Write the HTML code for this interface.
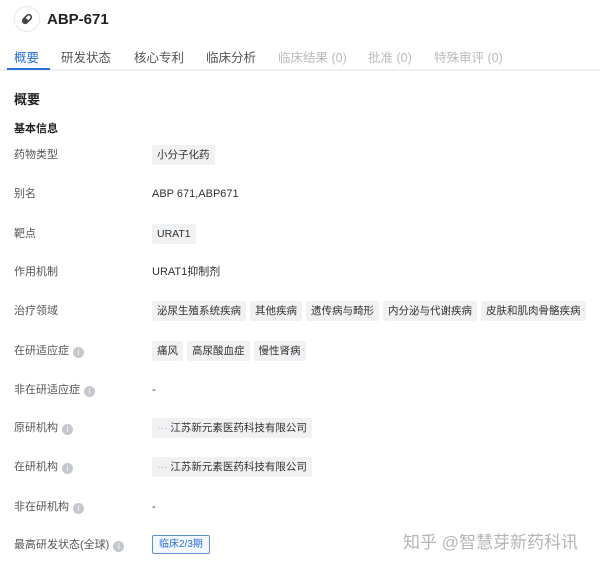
<!DOCTYPE html><html><head><meta charset="utf-8"><style>
body{margin:0;width:600px;height:563px;background:#fff;font-family:"Liberation Sans","Noto Sans CJK SC",sans-serif;color:#333;position:relative;overflow:hidden}
.a{position:absolute;white-space:nowrap}
.ic{position:absolute;left:14px;top:6px;width:26px;height:26px;border-radius:50%;border:1px solid #e6e6e6;box-sizing:border-box}
.tab{position:absolute;top:47px;font-size:12.5px;color:#555;white-space:nowrap}
.lbl{position:absolute;left:14px;font-size:11px;color:#555;line-height:14px;white-space:nowrap}
.val{position:absolute;left:152px;font-size:11px;color:#333;line-height:14px;white-space:nowrap}
.tag{display:inline-block;background:#f0f1f3;border-radius:2px;padding:3px 5px;font-size:10.5px;line-height:14px;margin-right:4px;color:#333}
.i{display:inline-block;width:11px;height:11px;border-radius:50%;background:#c4c7cc;color:#fff;font-size:8px;text-align:center;line-height:11px;vertical-align:-1px;margin-left:4px}
</style></head><body>
<div class="ic"><svg width="24" height="24" viewBox="0 0 24 24"><g transform="rotate(-45 12 12)"><rect x="7" y="9.5" width="10" height="5" rx="2.5" fill="none" stroke="#444" stroke-width="1.6"/><rect x="7" y="9.5" width="5" height="5" rx="2" fill="#444"/></g></svg></div>
<div class="a" style="left:47px;top:11px;font-size:15px;font-weight:bold;color:#222">ABP-671</div>
<div class="tab" style="left:14px;color:#2b6fd6">概要</div>
<div class="tab" style="left:61px">研发状态</div>
<div class="tab" style="left:134px">核心专利</div>
<div class="tab" style="left:206px">临床分析</div>
<div class="tab" style="left:278px;color:#bbb">临床结果 (0)</div>
<div class="tab" style="left:368px;color:#bbb">批准 (0)</div>
<div class="tab" style="left:434px;color:#bbb">特殊审评 (0)</div>
<div class="a" style="left:0;top:69px;width:600px;height:2px;background:#eef0f3"></div>
<div class="a" style="left:7px;top:68px;width:43px;height:2px;background:#2b6fd6"></div>
<div class="a" style="left:14px;top:89px;font-size:13px;font-weight:bold;color:#222">概要</div>
<div class="a" style="left:14px;top:120px;font-size:11px;font-weight:bold;color:#222">基本信息</div>
<div class="lbl" style="top:148px">药物类型</div><div class="val" style="top:145px"><span class="tag">小分子化药</span></div>
<div class="lbl" style="top:187px">别名</div><div class="val" style="top:187px">ABP 671,ABP671</div>
<div class="lbl" style="top:227px">靶点</div><div class="val" style="top:224px"><span class="tag">URAT1</span></div>
<div class="lbl" style="top:265px">作用机制</div><div class="val" style="top:265px">URAT1抑制剂</div>
<div class="lbl" style="top:304px">治疗领域</div><div class="val" style="top:301px"><span class="tag">泌尿生殖系统疾病</span><span class="tag">其他疾病</span><span class="tag">遗传病与畸形</span><span class="tag">内分泌与代谢疾病</span><span class="tag">皮肤和肌肉骨骼疾病</span></div>
<div class="lbl" style="top:344px">在研适应症<span class="i">i</span></div><div class="val" style="top:341px"><span class="tag">痛风</span><span class="tag">高尿酸血症</span><span class="tag">慢性肾病</span></div>
<div class="lbl" style="top:383px">非在研适应症<span class="i">i</span></div><div class="val" style="top:383px">-</div>
<div class="lbl" style="top:421px">原研机构<span class="i">i</span></div><div class="val" style="top:418px"><span class="tag"><span style="color:#bbb">···</span> 江苏新元素医药科技有限公司</span></div>
<div class="lbl" style="top:460px">在研机构<span class="i">i</span></div><div class="val" style="top:457px"><span class="tag"><span style="color:#e99">···</span> 江苏新元素医药科技有限公司</span></div>
<div class="lbl" style="top:500px">非在研机构<span class="i">i</span></div><div class="val" style="top:500px">-</div>
<div class="lbl" style="top:538px">最高研发状态(全球)<span class="i">i</span></div>
<div class="a" style="left:152px;top:535px;border:1px solid #5b8fd0;border-radius:2px;padding:2px 6px;font-size:10px;line-height:13px;color:#2b6fd6;background:#f5f9ff">临床2/3期</div>
<div class="a" style="left:403px;top:528px;font-size:17px;color:#b5b5b5">知乎 @智慧芽新药科讯</div>
</body></html>
